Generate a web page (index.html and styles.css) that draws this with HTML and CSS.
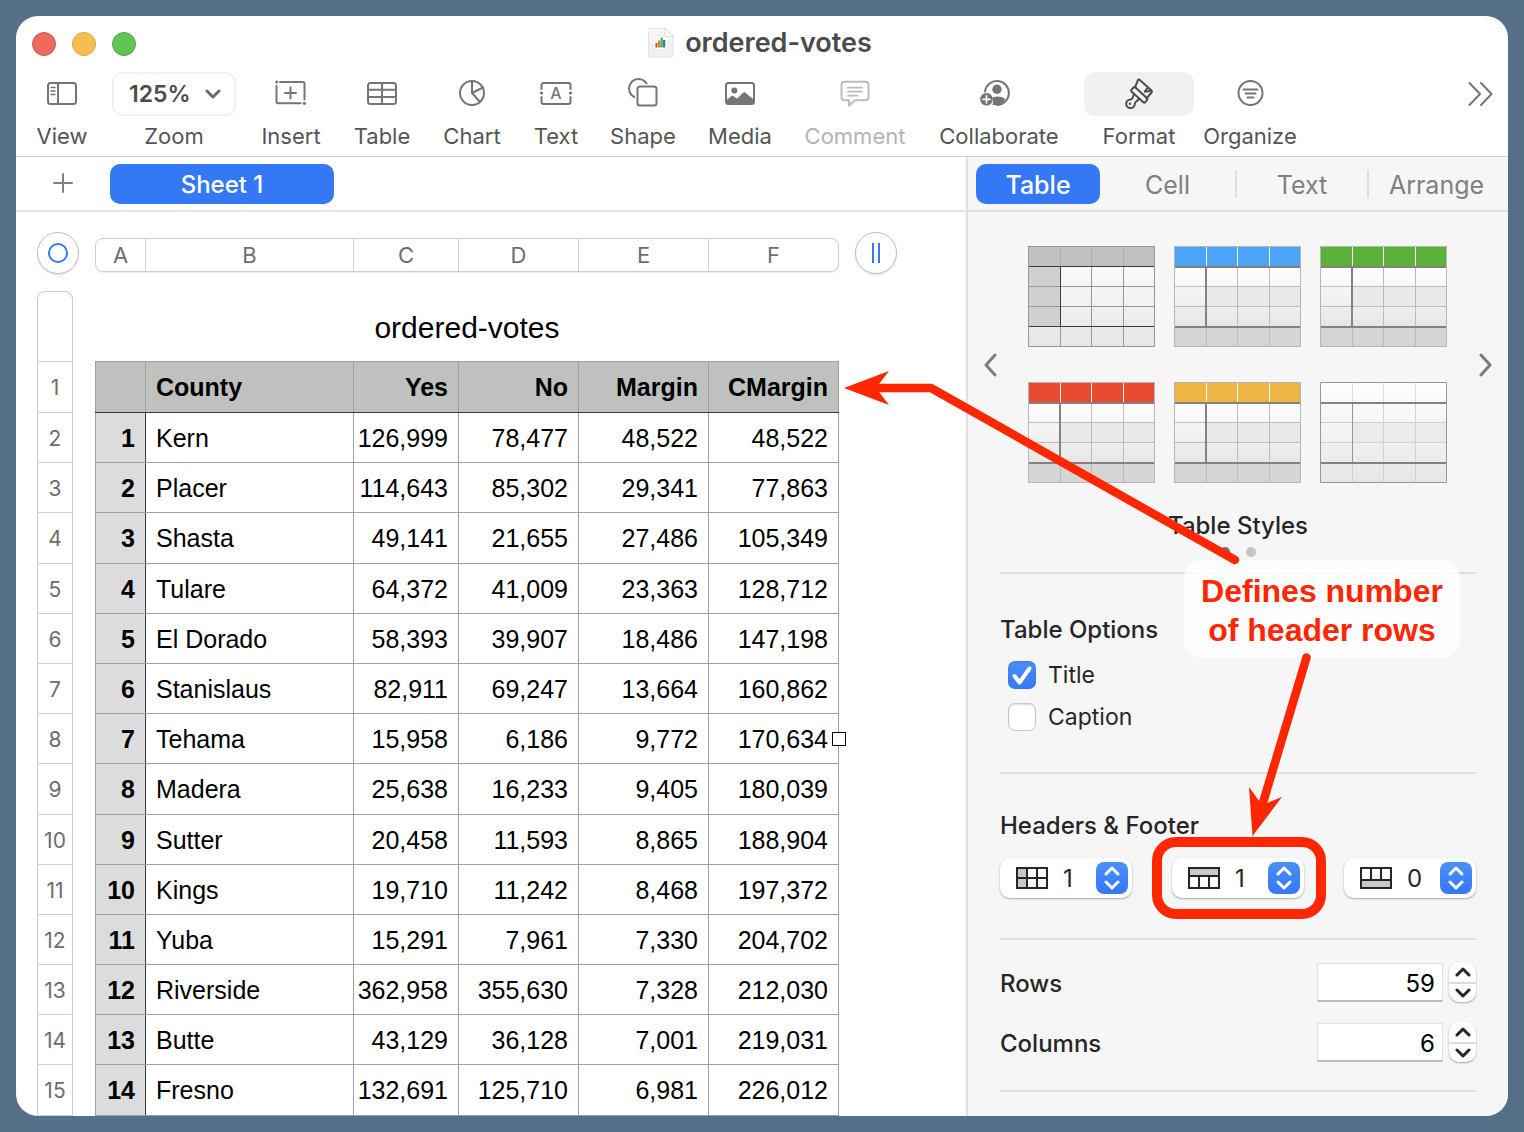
FILE: index.html
```html
<!DOCTYPE html>
<html lang="en">
<head>
<meta charset="utf-8">
<title>ordered-votes</title>
<link rel="stylesheet" href="styles.css">
</head>
<body>
<main class="window">
  <header class="titlebar">
    <div class="lights">
      <button class="light light-close" aria-label="Close"></button>
      <button class="light light-min" aria-label="Minimize"></button>
      <button class="light light-max" aria-label="Full screen"></button>
    </div>
    <h1 class="doc-title">
      <svg class="doc-icon" viewBox="0 0 26 30" aria-hidden="true">
        <defs>
          <linearGradient id="bars"><stop offset="0" stop-color="#c93a2b"/><stop offset=".3" stop-color="#f0862c"/><stop offset=".6" stop-color="#43b93a"/><stop offset="1" stop-color="#2f62e8"/></linearGradient>
          <linearGradient id="paper" x2="0" y2="1"><stop offset="0" stop-color="#f7f7f7"/><stop offset="1" stop-color="#efefef"/></linearGradient>
        </defs>
        <path d="M2.500 .5H17l8 8V27a2 2 0 0 1-2 2H2.500a2 2 0 0 1-2-2V2.500a2 2 0 0 1 2-2z" fill="url(#paper)" stroke="#e2e2e2"/>
        <path d="M17 .5V7a1.500 1.500 0 0 0 1.500 1.500H25z" fill="#fff" stroke="#cfcfcf" stroke-width=".7"/>
        <rect x="5" y="8" width="15" height="14" rx="3" fill="#fbfbfb" stroke="#e2e2e2" stroke-width=".6"/>
        <path d="M7.500 15h2.200v4.500H7.500zM10 12.500h2.200v7H10zM12.500 9.500h2.200v10h-2.200zM15 12h2.200v7.500H15z" fill="url(#bars)"/>
      </svg>
      ordered-votes
    </h1>
  </header>

  <nav class="toolbar" aria-label="Toolbar">
    <button class="tool">
      <svg class="icon" viewBox="0 0 36 32"><rect x="4" y="5" width="28" height="21" rx="2.500"/><path d="M14 5v21"/><path d="M7 9.500h4M7 13h4M7 16.500h4" stroke-width="1.300"/></svg>
      <span>View</span>
    </button>
    <div class="tool">
      <div class="zoom-box">
        <select class="zoom-select" id="zoom"><option>125%</option></select>
        <svg class="zoom-chevron" viewBox="0 0 16 10"><path d="M2 2l6 6 6-6"/></svg>
      </div>
      <label for="zoom">Zoom</label>
    </div>
    <button class="tool">
      <svg class="icon" viewBox="0 0 36 32"><path d="M7 4h23a1.500 1.500 0 0 1 1.500 1.500v16M3.500 8v15.800A1.500 1.500 0 0 0 5 25.300h22.500M17.500 9.500v11M12 15h11"/><circle class="solid" cx="3.700" cy="4" r="1.600"/><circle class="solid" cx="31.300" cy="25.300" r="1.600"/></svg>
      <span>Insert</span>
    </button>
    <button class="tool">
      <svg class="icon" viewBox="0 0 36 32"><rect x="4" y="5" width="28" height="21" rx="2.500"/><path d="M18 5v21M4 11.800h28M4 19h28"/></svg>
      <span>Table</span>
    </button>
    <button class="tool">
      <svg class="icon" viewBox="0 0 36 32"><circle cx="18" cy="15" r="12"/><path d="M18 3v12l8 9M18 15l11-5.500"/></svg>
      <span>Chart</span>
    </button>
    <button class="tool">
      <svg class="icon" viewBox="0 0 36 32"><path d="M3.500 11V7A2 2 0 0 1 5.500 5h25a2 2 0 0 1 2 2v4M3.500 19v5a2 2 0 0 0 2 2h25a2 2 0 0 0 2-2v-5"/><circle class="solid" cx="3.500" cy="15" r="1.600"/><circle class="solid" cx="32.500" cy="15" r="1.600"/><text x="18" y="21" text-anchor="middle">A</text></svg>
      <span>Text</span>
    </button>
    <button class="tool">
      <svg class="icon" viewBox="0 0 36 32"><circle cx="13.500" cy="10.500" r="9.500"/><rect x="10" y="6" width="23" height="23" fill="#fff" stroke="none" rx="4"/><rect x="12.500" y="8.500" width="19" height="19" rx="2.500"/></svg>
      <span>Shape</span>
    </button>
    <button class="tool">
      <svg class="icon" viewBox="0 0 36 32"><rect x="4" y="5" width="28" height="21" rx="2.500"/><circle class="solid" cx="12.300" cy="12.500" r="3"/><path class="solid" d="M4 22.500l5.500-4.500q1-.7 2 0l3.500 2.700 6-6q1.300-1 2.600 0L32 22v2a2 2 0 0 1-2 2H6a2 2 0 0 1-2-2z"/></svg>
      <span>Media</span>
    </button>
    <button class="tool tool-off" disabled>
      <svg class="icon" viewBox="0 0 36 32"><path d="M7.500 3.700h21A3 3 0 0 1 31.500 6.700v12.500a3 3 0 0 1-3 3H18l-6 5.500v-5.500H7.500a3 3 0 0 1-3-3V6.700a3 3 0 0 1 3-3z"/><path d="M11 9.700h14M11 13.700h14M11 17.700h9.500" stroke-width="1.700"/></svg>
      <span>Comment</span>
    </button>
    <button class="tool">
      <svg class="icon icon-wide" viewBox="0 0 36 32"><path d="M4 13.500A12 12 0 1 1 16 27"/><circle class="solid" cx="16" cy="11.300" r="4.700"/><path class="solid" d="M11.500 19.500q7-2.500 13 1.500-3 6-8.500 6h-4.500q1.500-4 0-7.500z"/><circle class="solid" cx="5.500" cy="21.300" r="6.300"/><path d="M5.500 17.800v7M2 21.300h7" stroke="#fff" stroke-width="1.700"/></svg>
      <span>Collaborate</span>
    </button>
    <button class="tool tool-on">
      <svg class="icon" viewBox="0 0 36 32"><path d="M14 9.500L16.800 2.300q.7-1.400 2-.3L30.500 12.500q.9 1 0 2L25.500 20.500M26.800 9.500l-3 4.200 3.200-.5 3.500-.7"/><path d="M14.300 9.300L26 20.300q.8.900 0 1.800l-1.800 2.200q-.9.900-1.900 0L10.500 13.500q-.9-.9 0-1.800L12.500 9.500q.9-.9 1.800-.2z"/><path d="M13 16l-1.500 4q-.5 1.300-2 1.500a4.300 4.300 0 1 0 4.300 4.500q0-1.500 1.500-2.500l3-2.800"/><circle cx="9" cy="25.700" r="1.200" fill="#4c4c4c" stroke="none"/></svg>
      <span>Format</span>
    </button>
    <button class="tool">
      <svg class="icon" viewBox="0 0 36 32"><circle cx="18.500" cy="15" r="12"/><path d="M11.500 11.500h14M13.500 15.500h10M15.500 19.500h6"/></svg>
      <span>Organize</span>
    </button>
    <button class="more" aria-label="More toolbar items">
      <svg class="icon" viewBox="0 0 36 32"><path d="M9.500 5L20 16 9.500 27M21 5l10.500 11L21 27"/></svg>
    </button>
  </nav>

  <div class="body">
    <section class="document">
      <div class="sheet-bar">
        <button class="add-sheet" aria-label="Add sheet"><svg viewBox="0 0 20 20"><path d="M10 1v18M1 10h18"/></svg></button>
        <button class="sheet-tab">Sheet 1</button>
      </div>
      <div class="canvas">
        <button class="handle" aria-label="Select table"><svg viewBox="0 0 20 20"><circle cx="10" cy="10" r="9"/></svg></button>
        <div class="col-strip"><span>A</span><span>B</span><span>C</span><span>D</span><span>E</span><span>F</span></div>
        <button class="handle" aria-label="Add columns"><svg viewBox="0 0 20 20"><path d="M7 0v20M13 0v20"/></svg></button>
        <ol class="row-strip"><li></li><li>1</li><li>2</li><li>3</li><li>4</li><li>5</li><li>6</li><li>7</li><li>8</li><li>9</li><li>10</li><li>11</li><li>12</li><li>13</li><li>14</li><li>15</li></ol>
        <div class="table-area">
          <table class="votes">
            <caption>ordered-votes</caption>
            <colgroup><col class="c-a"><col class="c-b"><col class="c-c"><col class="c-d"><col class="c-e"><col class="c-f"></colgroup>
            <thead><tr><th></th><th>County</th><th>Yes</th><th>No</th><th>Margin</th><th>CMargin</th></tr></thead>
            <tbody>
              <tr><th>1</th><td>Kern</td><td>126,999</td><td>78,477</td><td>48,522</td><td>48,522</td></tr>
              <tr><th>2</th><td>Placer</td><td>114,643</td><td>85,302</td><td>29,341</td><td>77,863</td></tr>
              <tr><th>3</th><td>Shasta</td><td>49,141</td><td>21,655</td><td>27,486</td><td>105,349</td></tr>
              <tr><th>4</th><td>Tulare</td><td>64,372</td><td>41,009</td><td>23,363</td><td>128,712</td></tr>
              <tr><th>5</th><td>El Dorado</td><td>58,393</td><td>39,907</td><td>18,486</td><td>147,198</td></tr>
              <tr><th>6</th><td>Stanislaus</td><td>82,911</td><td>69,247</td><td>13,664</td><td>160,862</td></tr>
              <tr><th>7</th><td>Tehama</td><td>15,958</td><td>6,186</td><td>9,772</td><td class="resize">170,634</td></tr>
              <tr><th>8</th><td>Madera</td><td>25,638</td><td>16,233</td><td>9,405</td><td>180,039</td></tr>
              <tr><th>9</th><td>Sutter</td><td>20,458</td><td>11,593</td><td>8,865</td><td>188,904</td></tr>
              <tr><th>10</th><td>Kings</td><td>19,710</td><td>11,242</td><td>8,468</td><td>197,372</td></tr>
              <tr><th>11</th><td>Yuba</td><td>15,291</td><td>7,961</td><td>7,330</td><td>204,702</td></tr>
              <tr><th>12</th><td>Riverside</td><td>362,958</td><td>355,630</td><td>7,328</td><td>212,030</td></tr>
              <tr><th>13</th><td>Butte</td><td>43,129</td><td>36,128</td><td>7,001</td><td>219,031</td></tr>
              <tr><th>14</th><td>Fresno</td><td>132,691</td><td>125,710</td><td>6,981</td><td>226,012</td></tr>
            </tbody>
          </table>
        </div>
      </div>
    </section>

    <aside class="inspector">
      <nav class="tabs" aria-label="Inspector">
        <button class="tab tab-on">Table</button><button class="tab">Cell</button><button class="tab">Text</button><button class="tab">Arrange</button>
      </nav>
      <div class="panel">
        <section class="styles">
          <svg class="defs" aria-hidden="true">
            <defs>
              <linearGradient id="cells" x2="0" y2="1"><stop offset="0" stop-color="#fff"/><stop offset="1" stop-color="#e6e6e6"/></linearGradient>
              <g id="thin"><path d="M0 40.500H127M0 60.500H127M32.500 21V100M63.500 21V100M95.500 21V100"/></g>
              <g id="ruled">
                <rect y="21" width="127" height="60" fill="url(#cells)"/>
                <rect x="33" y="41" width="94" height="20" fill="#e9e9e7"/>
                <rect y="81" width="127" height="20" fill="#d5d5d3"/>
                <use href="#thin" stroke="#bcbcbc"/>
                <rect x=".5" y=".5" width="126" height="100" fill="none" stroke="#b6b6b6"/>
                <path d="M32.500 1V20M63.500 1V20M95.500 1V20" stroke="#fff"/>
                <path d="M1 21H126M1 81H126M32 21V81" stroke="#85827e" stroke-width="2"/>
              </g>
            </defs>
          </svg>
          <button class="page-arrow" aria-label="Previous styles"><svg viewBox="0 0 14 24"><path d="M12 2L3 12l9 10"/></svg></button>
          <div class="gallery">
            <button class="thumb" aria-label="Gray style"><svg viewBox="0 0 127 101"><rect width="127" height="101" fill="url(#cells)"/><rect width="127" height="21" fill="#c0c2c0"/><rect y="21" width="32" height="60" fill="#d0d0d0"/><use href="#thin" stroke="#979797"/><path d="M32.500 0V20M63.500 0V20M95.500 0V20" stroke="#acacac"/><rect x=".5" y=".5" width="126" height="100" fill="none" stroke="#979797"/><path d="M1 20.500H126M1 80.500H126M32.500 21V80" stroke="#3c3c3c"/></svg></button>
            <button class="thumb" aria-label="Blue style"><svg viewBox="0 0 127 101"><rect width="127" height="21" fill="#4da4f6"/><use href="#ruled"/></svg></button>
            <button class="thumb" aria-label="Green style"><svg viewBox="0 0 127 101"><rect width="127" height="21" fill="#5cb238"/><use href="#ruled"/></svg></button>
            <button class="thumb" aria-label="Red style"><svg viewBox="0 0 127 101"><rect width="127" height="21" fill="#e94b30"/><use href="#ruled"/></svg></button>
            <button class="thumb" aria-label="Yellow style"><svg viewBox="0 0 127 101"><rect width="127" height="21" fill="#efb544"/><use href="#ruled"/></svg></button>
            <button class="thumb" aria-label="Plain style"><svg viewBox="0 0 127 101"><rect width="127" height="101" fill="url(#cells)"/><rect x="33" y="41" width="94" height="20" fill="#e8ecea"/><use href="#thin" stroke="#d2d2d2"/><path d="M32.500 0V20M63.500 0V20M95.500 0V20" stroke="#dcdcdc"/><path d="M32.500 21V81" stroke="#979797"/><rect x=".5" y=".5" width="126" height="100" fill="none" stroke="#979797"/><path d="M1 21H126M1 81H126" stroke="#85827e" stroke-width="2"/></svg></button>
          </div>
          <button class="page-arrow" aria-label="Next styles"><svg viewBox="0 0 14 24"><path d="M2 2l9 10-9 10"/></svg></button>
        </section>
        <div class="styles-caption">
          <h2>Table Styles</h2>
          <div class="dots"><i class="dot dot-on"></i><i class="dot"></i></div>
        </div>
        <section class="group options">
          <h2>Table Options</h2>
          <label class="check"><input type="checkbox" checked><svg class="tick" viewBox="0 0 28 28"><path d="M6.500 15l5 6.500L21.500 7.500"/></svg>Title</label>
          <label class="check"><input type="checkbox">Caption</label>
        </section>
        <section class="group headers">
          <h2>Headers &amp; Footer</h2>
          <div class="pickers">
            <div class="picker">
              <select aria-label="Header columns"><option>1</option></select>
              <svg class="picker-icon" viewBox="0 0 32 22"><rect x="1" y="1" width="30" height="20" fill="#fff"/><rect x="1" y="1" width="10" height="20" fill="#c8c8c8"/><path d="M1 1h30v20H1zM11 1v20M21 1v20M1 11h30"/></svg>
              <svg class="updown" viewBox="0 0 32 32"><path d="M10 12l6-6 6 6M10 20l6 6 6-6"/></svg>
            </div>
            <div class="picker">
              <select aria-label="Header rows"><option>1</option></select>
              <svg class="picker-icon" viewBox="0 0 32 22"><rect x="1" y="1" width="30" height="20" fill="#fff"/><rect x="1" y="1" width="30" height="8" fill="#c8c8c8"/><path d="M1 1h30v20H1zM1 9h30M11 9v12M21 9v12"/></svg>
              <svg class="updown" viewBox="0 0 32 32"><path d="M10 12l6-6 6 6M10 20l6 6 6-6"/></svg>
            </div>
            <div class="picker">
              <select aria-label="Footer rows"><option>0</option></select>
              <svg class="picker-icon" viewBox="0 0 32 22"><rect x="1" y="1" width="30" height="20" fill="#fff"/><rect x="1" y="13" width="30" height="8" fill="#c8c8c8"/><path d="M1 1h30v20H1zM1 13h30M11 1v12M21 1v12"/></svg>
              <svg class="updown" viewBox="0 0 32 32"><path d="M10 12l6-6 6 6M10 20l6 6 6-6"/></svg>
            </div>
          </div>
        </section>
        <section class="group counts">
          <div class="count">
            <label for="rows">Rows</label><input id="rows" type="text" value="59">
            <div class="stepper"><button aria-label="More rows"><svg viewBox="0 0 16 10"><path d="M2 8l6-6 6 6"/></svg></button><button aria-label="Fewer rows"><svg viewBox="0 0 16 10"><path d="M2 2l6 6 6-6"/></svg></button></div>
          </div>
          <div class="count">
            <label for="columns">Columns</label><input id="columns" type="text" value="6">
            <div class="stepper"><button aria-label="More columns"><svg viewBox="0 0 16 10"><path d="M2 8l6-6 6 6"/></svg></button><button aria-label="Fewer columns"><svg viewBox="0 0 16 10"><path d="M2 2l6 6 6-6"/></svg></button></div>
          </div>
        </section>
        <div class="group"></div>
      </div>
    </aside>
  </div>

  <p class="callout">Defines number<br>of header rows</p>
  <svg class="arrows" viewBox="828 16 680 920" aria-hidden="true">
    <path d="M874 388H931L1235 560M1306.500 657.500L1262 806" fill="none" stroke="#ff2600" stroke-width="8.500" stroke-linecap="round" stroke-linejoin="miter"/>
    <path d="M844 388L889 371 876 388 889 405zM1252.500 836L1249 787 1262 805 1282 797z" fill="#ff2600"/>
    <rect x="1157" y="842" width="164" height="72" rx="19" fill="none" stroke="#ff2600" stroke-width="10"/>
  </svg>
</main>
</body>
</html>
```
FILE: styles.css
```css
* { box-sizing: border-box; }

body {
  margin: 0;
  padding: 16px;
  background: #566f88;
  font-family: Inter, "Liberation Sans", sans-serif;
  font-size: 22px;
  color: #262626;
}

button, select, input { font: inherit; color: inherit; }
button { margin: 0; padding: 0; border: 0; background: none; }
h1, h2, p, ol { margin: 0; padding: 0; }
svg { display: block; fill: none; stroke-linecap: round; stroke-linejoin: round; }

.window {
  position: relative;
  display: flex;
  flex-direction: column;
  min-height: calc(100vh - 32px);
  border-radius: 22px;
  overflow: hidden;
  background: #fff;
}

/* Title bar */
.titlebar {
  display: grid;
  grid-template-columns: 1fr auto 1fr;
  align-items: center;
  height: 56px;
  padding: 0 20px 0 16px;
}
.lights { display: flex; gap: 16px; }
.light { width: 24px; height: 24px; border-radius: 50%; border: 1px solid; }
.light-close { background: #ed6a5e; border-color: #d5564b; }
.light-min { background: #f5bf4f; border-color: #d9a33e; }
.light-max { background: #61c554; border-color: #4fa73f; }
.doc-title {
  display: flex;
  align-items: center;
  gap: 11px;
  padding-bottom: 2px;
  font-size: 27px;
  line-height: 32px;
  font-weight: 600;
  color: #4b4b4b;
}
.doc-icon { width: 26px; height: 30px; }

/* Toolbar */
.toolbar {
  display: grid;
  grid-template-columns: 76px 148px 86px 96px 84px 84px 90px 104px 126px 162px 118px 104px 1fr 40px;
  height: 85px;
  padding: 0 8px;
  border-bottom: 1px solid #d2d2d2;
  color: #555;
}
.tool {
  display: flex;
  flex-direction: column;
  align-items: center;
  gap: 6px;
  line-height: 28px;
}
.icon { box-sizing: content-box; width: 36px; height: 32px; padding: 6px 0; stroke: #757575; stroke-width: 2; }
.icon-wide { overflow: visible; }
.icon .solid { fill: #757575; stroke: none; }
.icon text { fill: #757575; stroke: none; font-size: 16px; font-weight: 500; }
.tool-off { color: #b4b4b4; }
.tool-off .icon { stroke: #bcbcbc; }
.tool-on .icon { padding: 6px 37px; border-radius: 10px; background: #f1f1f1; stroke: #4c4c4c; }
.more { grid-column: 14; align-self: start; }
.zoom-box { display: grid; align-items: center; width: 124px; height: 44px; border: 2px solid #f1f1f1; border-radius: 10px; }
.zoom-select { grid-area: 1 / 1; height: 40px; padding: 0 0 0 15px; border: 0; background: none; appearance: none; font-size: 23px; font-weight: 600; color: #4b4b4b; }
.zoom-chevron { grid-area: 1 / 1; justify-self: end; width: 16px; height: 10px; margin-right: 13px; stroke: #6a6a6a; stroke-width: 3; pointer-events: none; }

/* Document side */
.body { display: flex; flex: 1; }
.document { flex: 1; min-width: 0; }
.sheet-bar { display: flex; align-items: center; height: 55px; padding-left: 37px; border-bottom: 2px solid #e5e5e5; }
.add-sheet { height: 22px; margin-right: 37px; }
.add-sheet svg { width: 20px; height: 20px; margin-bottom: 2px; stroke: #808080; stroke-width: 2; }
.sheet-tab { width: 224px; height: 40px; padding-top: 1px; border-radius: 10px; background: #3478f6; color: #fff; font-size: 24px; font-weight: 500; }
.canvas {
  display: grid;
  grid-template-columns: 42px 744px 42px;
  grid-template-rows: 42px auto;
  column-gap: 16px;
  row-gap: 17px;
  align-items: start;
  padding: 20px 0 0 21px;
}
.handle { display: grid; place-items: center; width: 42px; height: 42px; border: 1px solid #bdbdbd; border-radius: 50%; box-shadow: 0 1px 2px #0002; }
.handle svg { width: 20px; height: 20px; stroke: #3478f6; stroke-width: 2; stroke-linecap: butt; }
.col-strip {
  display: grid;
  grid-template-columns: 49px 208px 105px 120px 130px 130px;
  height: 34px;
  margin-top: 6px;
  border: 1px solid #cdcdcd;
  border-radius: 8px;
  box-shadow: 0 1px 1px #0001;
  line-height: 32px;
  text-align: center;
  color: #6d6d6d;
}
.col-strip span + span { border-left: 1px solid #d2d2d2; }
.row-strip { width: 36px; border: 1px solid #cdcdcd; border-bottom: 0; border-radius: 8px 8px 0 0; list-style: none; text-align: center; font-size: 21px; color: #6d6d6d; }
.row-strip li { height: 50px; border-bottom: 1px solid #d2d2d2; line-height: 52px; }
.row-strip li:first-child { height: 70px; }
.row-strip li:nth-child(2), .row-strip li:nth-child(5), .row-strip li:nth-child(10), .row-strip li:last-child { height: 51px; }

/* Vote table */
.votes {
  width: 744px;
  border-collapse: collapse;
  table-layout: fixed;
  font-family: "Liberation Sans", Arial, sans-serif;
  font-size: 25px;
  color: #000;
}
.votes caption { height: 70px; line-height: 74px; font-size: 30px; }
.c-a { width: 50px; }
.c-b { width: 208px; }
.c-c { width: 105px; }
.c-d { width: 120px; }
.c-e, .c-f { width: 130px; }
.votes tr { height: 50px; }
.votes thead tr, .votes tbody tr:nth-child(3), .votes tbody tr:nth-child(8), .votes tbody tr:last-child { height: 51px; }
.votes th, .votes td { padding: 0 10px 0 0; border: 1px solid #a0a0a0; text-align: right; line-height: 30px; }
.votes th:nth-child(2), .votes td:nth-child(2) { padding-left: 10px; text-align: left; }
.votes thead th { background: #bfc1bf; border-bottom-color: #3c3c3c; }
.votes tbody th { background: #dcdcdc; border-right-color: #3c3c3c; }
.resize { position: relative; }
.resize::after { content: ""; position: absolute; right: -8px; top: 18px; width: 12px; height: 12px; border: 1px solid #000; background: #fff; }

/* Inspector */
.inspector { width: 542px; border-left: 2px solid #e0e0e0; background: #f6f6f6; }
.tabs { display: grid; grid-template-columns: 124px 137px 132px 1fr; align-items: center; height: 55px; padding: 0 4px 0 8px; border-bottom: 2px solid #dedede; }
.tab { height: 28px; padding-top: 2px; font-size: 25px; line-height: 26px; color: #808080; }
.tab + .tab { border-right: 2px solid #dedede; }
.tab + .tab:last-child { border-right: 0; }
.tab-on { height: 40px; border-radius: 10px; background: #3478f6; color: #fff; font-weight: 500; }
.panel { padding: 34px 32px 0; }
h2 { font-size: 24px; line-height: 28px; font-weight: 500; }
.styles { display: flex; justify-content: space-between; align-items: center; margin: 0 -17px; }
.defs { position: absolute; width: 0; height: 0; }
.page-arrow svg { width: 14px; height: 24px; stroke: #7c7c7c; stroke-width: 3; }
.gallery { display: grid; grid-template-columns: repeat(3, 127px); gap: 35px 19px; margin-right: 2px; }
.thumb svg { width: 127px; height: 101px; stroke-linecap: butt; }
.styles-caption { height: 89px; padding-top: 29px; text-align: center; }
.dots { display: flex; justify-content: center; gap: 16px; margin-top: 7px; }
.dot { width: 10px; height: 10px; border-radius: 50%; background: #c4c4c4; }
.dot-on { background: #707070; }
.group { border-top: 2px solid #dedede; }
.options { height: 200px; padding-top: 42px; }
.headers { height: 166px; padding-top: 38px; }
.counts { height: 152px; padding-top: 22px; }
.check { display: grid; grid-template-columns: 28px 1fr; column-gap: 12px; align-items: center; height: 42px; padding-left: 8px; font-size: 23px; }
.options h2 { margin-bottom: 10px; }
.check input { grid-area: 1 / 1; width: 28px; height: 28px; margin: 0; appearance: none; border: 1px solid #c6c6c6; border-radius: 7px; background: #fff; box-shadow: inset 0 1px 2px #0002; }
.check input:checked { border: 0; background: linear-gradient(#4a8ff8, #3478f6); }
.tick { grid-area: 1 / 1; width: 28px; height: 28px; stroke: #fff; stroke-width: 4; pointer-events: none; }
.check input:not(:checked) + .tick { visibility: hidden; }
.pickers { display: flex; justify-content: space-between; margin-top: 18px; }
.picker { display: grid; align-items: center; width: 132px; height: 40px; border-radius: 10px; background: #fff; box-shadow: 0 1px 2px #0005; }
.picker > * { grid-area: 1 / 1; }
.picker select { width: 132px; height: 40px; padding: 0 0 0 63px; border: 0; background: none; appearance: none; font-size: 24px; }
.picker-icon { width: 32px; height: 22px; margin-left: 16px; stroke: #262626; stroke-width: 2; stroke-linejoin: miter; pointer-events: none; }
.updown { justify-self: end; width: 32px; height: 32px; margin-right: 4px; border-radius: 8px; background: linear-gradient(#4a8ff8, #3478f6); stroke: #fff; stroke-width: 3; pointer-events: none; }
.count { display: flex; align-items: center; height: 40px; margin-bottom: 20px; font-size: 24px; font-weight: 500; }
.count label { padding-top: 3px; }
.count input { width: 126px; height: 39px; margin: 0 6px 0 auto; padding: 4px 7px 0; border: 1px solid #e2e2e2; border-bottom: 2px solid #bdbdbd; background: #fff; text-align: right; font-size: 24px; font-weight: 400; color: #000; }
.stepper { width: 27px; height: 40px; border-radius: 10px; background: #fff; box-shadow: 0 1px 2px #0005; }
.stepper button { display: grid; place-items: center; width: 27px; height: 20px; }
.stepper button + button { border-top: 2px solid #dcdcdc; }
.stepper svg { width: 16px; height: 10px; stroke: #262626; stroke-width: 3; }

/* Annotation */
.callout {
  position: absolute;
  top: 544px;
  right: 48px;
  width: 276px;
  padding: 12px 0 8px;
  border-radius: 18px;
  background: #fffc;
  font: 700 32px/39px "Liberation Sans", Arial, sans-serif;
  text-align: center;
  color: #ff2600;
}
.arrows { position: absolute; top: 0; right: 0; width: 680px; height: 920px; pointer-events: none; }
```
